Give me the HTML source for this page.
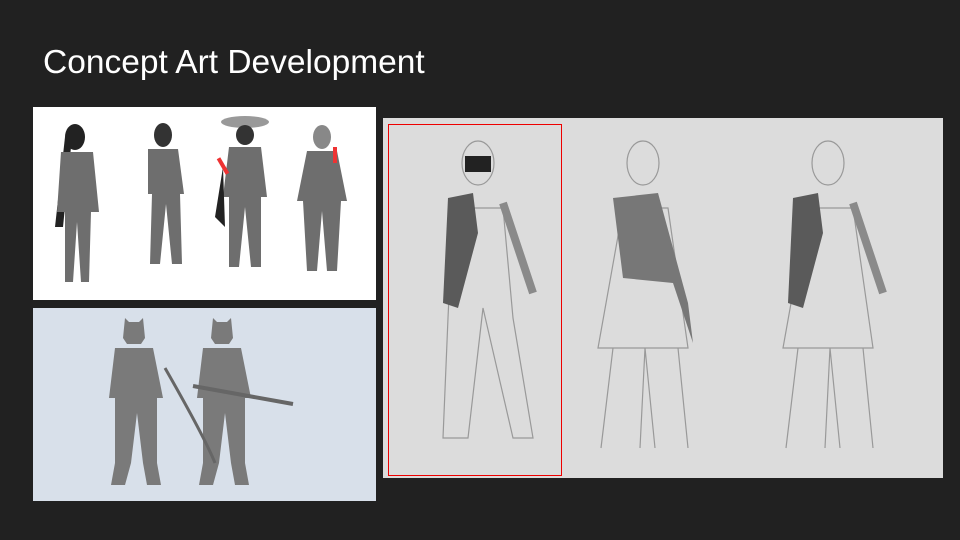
<!DOCTYPE html>
<html><head><meta charset="utf-8"><style>
html,body{margin:0;padding:0}
body{width:960px;height:540px;background:#212121;position:relative;overflow:hidden;font-family:"Liberation Sans",sans-serif}
.t{position:absolute;left:43px;top:44px;color:#fff;font-size:33.5px;white-space:nowrap}
.p{position:absolute}
</style></head><body>
<div class="t">Concept Art Development</div>

<svg class="p" style="left:33px;top:107px" width="343" height="193" viewBox="0 0 343 193">
<rect width="343" height="193" fill="#fff"/>
<g fill="#6e6e6e">
<ellipse cx="42" cy="30" rx="10" ry="13" fill="#222"/><path d="M32 30 L22 120 L30 120 L38 40Z" fill="#222"/>
<path d="M28 45 h32 l6 60 h-8 l-2 70 h-8 l-4-60 l-4 60 h-8 l0-70 h-8z"/>
<ellipse cx="130" cy="28" rx="9" ry="12" fill="#333"/>
<path d="M115 42 h30 l6 45 l-4 0 l2 70 h-10 l-6-60 l-6 60 h-10 l2-70 l-4 0z"/>
<ellipse cx="212" cy="15" rx="24" ry="6" fill="#999"/><ellipse cx="212" cy="28" rx="9" ry="10" fill="#333"/>
<path d="M196 40 h32 l6 50 l-6 0 l0 70 h-10 l-6-60 l-6 60 h-10 l0-70 l-6 0z"/>
<path d="M190 60 l-8 50 l10 10z" fill="#222"/>
<ellipse cx="289" cy="30" rx="9" ry="12" fill="#888"/>
<path d="M274 44 h30 l10 50 l-6 0 l-4 70 h-10 l-5-60 l-5 60 h-10 l-4-70 l-6 0z"/>
</g>
<g fill="#e33"><rect x="188" y="50" width="4" height="18" transform="rotate(-30 190 59)"/><rect x="300" y="40" width="4" height="16"/></g>
</svg>

<svg class="p" style="left:33px;top:308px" width="343" height="193" viewBox="0 0 343 193">
<rect width="343" height="193" fill="#d8e0ea"/>
<g fill="#7a7a7a">
<path d="M92 10 l4 4 h10 l4-4 l2 20 l-4 6 h-14 l-4-6z"/>
<path d="M82 40 h38 l10 50 l-6 0 l0 65 l4 22 h-14 l-4-22 l-6-50 l-6 50 l-6 22 h-14 l4-22 l0-65 l-6 0z"/>
<path d="M180 10 l4 4 h10 l4-4 l2 20 l-4 6 h-14 l-4-6z"/>
<path d="M170 40 h38 l10 50 l-6 0 l0 65 l4 22 h-14 l-4-22 l-6-50 l-6 50 l-6 22 h-14 l4-22 l0-65 l-6 0z"/>
</g>
<path d="M132 60 q40 70 50 95" stroke="#666" stroke-width="3" fill="none"/>
<path d="M160 78 l100 18" stroke="#666" stroke-width="4"/>
</svg>

<svg class="p" style="left:383px;top:118px" width="560" height="360" viewBox="0 0 560 360">
<rect width="560" height="360" fill="#dcdcdc"/>
<g fill="none" stroke="#999" stroke-width="1.2">
<ellipse cx="95" cy="45" rx="16" ry="22"/><path d="M70 90 h50 l10 110 l20 120 h-20 l-30-130 l-15 130 h-25 l5-120z"/>
<ellipse cx="260" cy="45" rx="16" ry="22"/><path d="M240 90 h45 l20 140 h-90z M230 230 l-12 100 M295 230 l10 100 M262 230 l-5 100 M262 230 l10 100"/>
<ellipse cx="445" cy="45" rx="16" ry="22"/><path d="M425 90 h45 l20 140 h-90z M415 230 l-12 100 M480 230 l10 100 M447 230 l-5 100 M447 230 l10 100"/>
</g>
<rect x="82" y="38" width="26" height="16" fill="#222"/>
<path d="M65 80 l25 -5 l5 40 l-20 75 l-15 -5z" fill="#5a5a5a"/>
<path d="M230 80 l45 -5 l30 110 l5 40 l-20-60 l-50-5z" fill="#777"/>
<path d="M410 80 l25 -5 l5 40 l-20 75 l-15 -5z" fill="#5a5a5a"/>
<path d="M120 85 l30 90" stroke="#8a8a8a" stroke-width="8"/>
<path d="M470 85 l30 90" stroke="#8a8a8a" stroke-width="8"/>
</svg>
<div class="p" style="left:388px;top:124px;width:172px;height:350px;border:1px solid #e00"></div>
</body></html>
